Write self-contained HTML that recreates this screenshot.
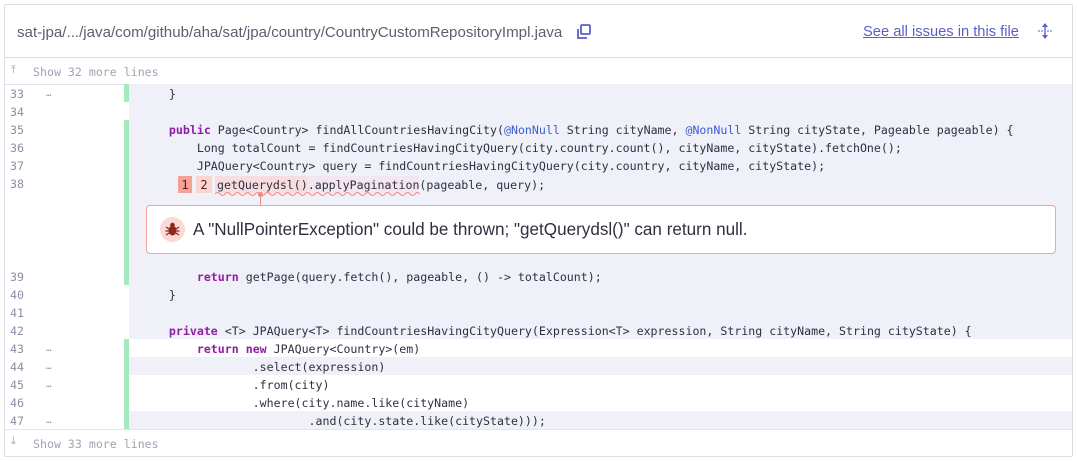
<!DOCTYPE html>
<html><head><style>
*{margin:0;padding:0;box-sizing:border-box}
body{width:1078px;height:462px;background:#fff;font-family:"Liberation Sans",sans-serif;position:relative;overflow:hidden}
.box{position:absolute;left:4px;top:4px;width:1069px;height:453px;border:1px solid #dcdce2;border-radius:2px}
.hdr{position:absolute;left:4px;top:4px;width:1069px;height:54px;border-bottom:1px solid #dcdce2}
.path{position:absolute;left:13px;top:20px;font-size:15.1px;color:#5c5f70}
.see{position:absolute;left:859px;top:20px;font-size:14.7px;color:#5a5fc8;text-decoration:underline}
.more{position:absolute;left:5px;width:1067px;height:27px;font-family:"DejaVu Sans Mono",monospace;font-size:11.6px;color:#a0a3b4;padding-left:28px;line-height:28px}
.row{position:absolute;left:5px;width:1067px;height:18px;font-family:"DejaVu Sans Mono",monospace;font-size:11.6px;line-height:21px;color:#2e3040;white-space:pre}
.row .n{position:absolute;left:5px;color:#8a8ea4;width:30px}
.row .d{position:absolute;left:41px;color:#8a8ea4;font-size:9px}
.row .c{position:absolute;left:124px;right:0;top:0;bottom:0;padding-left:12px}
.lav{background:#f0f0f9}
.g{position:absolute;left:119px;width:5px;background:#a6e9bf}
.k{color:#8f1ca3;font-weight:bold}
.a{color:#3b5cd1}
</style></head><body>
<div class="box"></div>
<div class="hdr">
<div class="path">sat-jpa/.../java/com/github/aha/sat/jpa/country/CountryCustomRepositoryImpl.java</div>
<svg style="position:absolute;left:571px;top:19px" width="18" height="18" viewBox="0 0 18 18" fill="none" stroke="#5a5fc8" stroke-width="1.8"><rect x="6" y="2" width="9" height="9" rx="1"/><path d="M3 6v9h9"/></svg>
<div class="see">See all issues in this file</div>
<svg style="position:absolute;left:1033px;top:18px" width="16" height="18" viewBox="0 0 16 18" fill="#5a5fc8"><path d="M8 1l-3 4h6z M8 17l-3-4h6z"/><rect x="7.3" y="4" width="1.4" height="10"/><rect x="1" y="8.5" width="2" height="1"/><rect x="4" y="8.5" width="2" height="1"/><rect x="10" y="8.5" width="2" height="1"/><rect x="13" y="8.5" width="2" height="1"/></svg>
</div>
<div class="more" style="top:58px;border-bottom:1px solid #e4e4ea">Show 32 more lines</div>
<span style="position:absolute;left:11px;top:64px;font-size:11px;color:#a0a3b4">⤒</span>

<div style="position:absolute;left:129px;top:84px;width:943px;height:255px;background:#f0f0f9"></div>

<div class="row" style="top:84px"><span class="n">33</span><span class="d">…</span><span class="c lav">    }</span></div>
<div class="row" style="top:102px"><span class="n">34</span><span class="c lav"></span></div>
<div class="row" style="top:120px"><span class="n">35</span><span class="c lav">    <span class="k">public</span> Page&lt;Country&gt; findAllCountriesHavingCity(<span class="a">@NonNull</span> String cityName, <span class="a">@NonNull</span> String cityState, Pageable pageable) {</span></div>
<div class="row" style="top:138px"><span class="n">36</span><span class="c lav">        Long totalCount = findCountriesHavingCityQuery(city.country.count(), cityName, cityState).fetchOne();</span></div>
<div class="row" style="top:156px"><span class="n">37</span><span class="c lav">        JPAQuery&lt;Country&gt; query = findCountriesHavingCityQuery(city.country, cityName, cityState);</span></div>
<div class="row" style="top:174px"><span class="n">38</span><span class="c lav"></span></div>
<div style="position:absolute;left:178px;top:176px;width:14px;height:17px;background:#f7a196;color:#5a1a14;font-family:'DejaVu Sans Mono',monospace;font-size:12px;text-align:center;line-height:19px">1</div>
<div style="position:absolute;left:196px;top:176px;width:16px;height:17px;background:#fbd6d0;color:#5a1a14;font-family:'DejaVu Sans Mono',monospace;font-size:12px;text-align:center;line-height:19px">2</div>
<div style="position:absolute;left:215px;top:176px;width:92px;height:17px;background:#f7dde0"></div>
<div style="position:absolute;left:307px;top:176px;width:112px;height:17px;background:#f3e6ee"></div>
<div class="row" style="top:175px;left:217px;width:auto">getQuerydsl().applyPagination(pageable, query);</div>
<svg style="position:absolute;left:215px;top:191px" width="205" height="6"><path d="M0 3 q2.5 -3 5 0 t5 0 t5 0 t5 0 t5 0 t5 0 t5 0 t5 0 t5 0 t5 0 t5 0 t5 0 t5 0 t5 0 t5 0 t5 0 t5 0 t5 0 t5 0 t5 0 t5 0 t5 0 t5 0 t5 0 t5 0 t5 0 t5 0 t5 0 t5 0 t5 0 t5 0 t5 0 t5 0 t5 0 t5 0 t5 0 t5 0 t5 0 t5 0 t5 0 t5 0" fill="none" stroke="#f08a80" stroke-width="1"/></svg>
<div style="position:absolute;left:260px;top:194px;width:1px;height:11px;background:#f08a80"></div>
<div style="position:absolute;left:258px;top:192px;width:5px;height:5px;border-radius:50%;background:#f08a80"></div>

<div class="g" style="top:84px;height:18px;left:124px"></div>
<div class="g" style="top:120px;height:165px;left:124px"></div>

<div style="position:absolute;left:146px;top:205px;width:910px;height:49px;background:#fff;border:1px solid #f2a59c;border-radius:4px"></div>
<div style="position:absolute;left:160px;top:217px;width:25px;height:25px;border-radius:50%;background:#fbd9d4"></div>
<svg style="position:absolute;left:165px;top:221px" width="15" height="16" viewBox="0 0 15 16" fill="#8a2a1e"><ellipse cx="7.5" cy="9.5" rx="4" ry="5"/><circle cx="7.5" cy="4" r="2.3"/><path d="M1 6l3 2M14 6l-3 2M0.5 10h3M14.5 10h-3M1 14l3-2M14 14l-3-2" stroke="#8a2a1e" stroke-width="1.3"/></svg>
<div style="position:absolute;left:193px;top:220px;font-size:17.1px;color:#2e3040">A "NullPointerException" could be thrown; "getQuerydsl()" can return null.</div>

<div class="row" style="top:267px"><span class="n">39</span><span class="c lav">        <span class="k">return</span> getPage(query.fetch(), pageable, () -&gt; totalCount);</span></div>
<div class="row" style="top:285px"><span class="n">40</span><span class="c lav">    }</span></div>
<div class="row" style="top:303px"><span class="n">41</span><span class="c lav"></span></div>
<div class="row" style="top:321px"><span class="n">42</span><span class="c lav">    <span class="k">private</span> &lt;T&gt; JPAQuery&lt;T&gt; findCountriesHavingCityQuery(Expression&lt;T&gt; expression, String cityName, String cityState) {</span></div>
<div class="row" style="top:339px"><span class="n">43</span><span class="d">…</span><span class="c" style="background:#fff">        <span class="k">return</span> <span class="k">new</span> JPAQuery&lt;Country&gt;(em)</span></div>
<div class="row" style="top:357px"><span class="n">44</span><span class="d">…</span><span class="c lav">                .select(expression)</span></div>
<div class="row" style="top:375px"><span class="n">45</span><span class="d">…</span><span class="c" style="background:#fff">                .from(city)</span></div>
<div class="row" style="top:393px"><span class="n">46</span><span class="c" style="background:#fff">                .where(city.name.like(cityName)</span></div>
<div class="row" style="top:411px"><span class="n">47</span><span class="d">…</span><span class="c lav">                        .and(city.state.like(cityState)));</span></div>
<div class="g" style="top:339px;height:90px;left:124px"></div>
<div class="more" style="top:429px;border-top:1px solid #e4e4ea;line-height:28px">Show 33 more lines</div>
<span style="position:absolute;left:11px;top:435px;font-size:11px;color:#a0a3b4">⤓</span>
</body></html>
